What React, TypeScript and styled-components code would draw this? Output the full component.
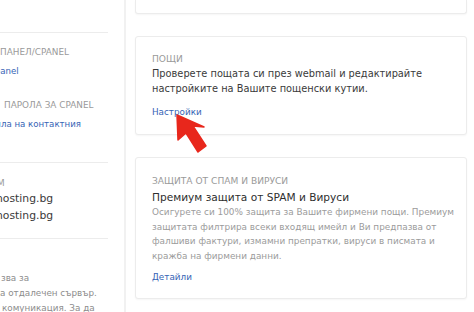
import styled, { createGlobalStyle } from "styled-components";

const GlobalStyle = createGlobalStyle`
  html, body {
    margin: 0;
    padding: 0;
    background: #ffffff;
  }
  body {
    font-family: "DejaVu Sans", "Liberation Sans", sans-serif;
    overflow: hidden;
  }
`;

const Page = styled.div({
  display: "flex",
  width: 474,
  height: 312,
  overflow: "hidden",
  background: "#fff",
});

const Sidebar = styled.aside({
  width: 108,
  flexShrink: 0,
  overflow: "hidden",
});

const SideSection = styled.div<{ $height: number; $top: number }>(
  ({ $height, $top }) => ({
    height: $height,
    boxSizing: "border-box",
    paddingTop: $top,
    borderBottom: "1px solid #ececec",
    whiteSpace: "nowrap",
    "&:last-of-type": {
      borderBottom: "none",
    },
  })
);

const SideLabel = styled.div<{ $indent?: number; $gap?: number }>(
  ({ $indent = 0, $gap = 0 }) => ({
    fontSize: 8.9,
    lineHeight: "14px",
    color: "#9a9a9a",
    textTransform: "uppercase",
    textIndent: $indent,
    marginTop: $gap,
  })
);

const SideLink = styled.a<{ $indent?: number }>(({ $indent = 0 }) => ({
  display: "block",
  fontSize: 8.6,
  lineHeight: "16px",
  marginTop: 4,
  color: "#3563b5",
  textDecoration: "none",
  textIndent: $indent,
}));

const SideValue = styled.div<{ $indent?: number }>(({ $indent = 0 }) => ({
  fontSize: 10.8,
  lineHeight: "17px",
  color: "#3a3a3a",
  textIndent: $indent,
  "&:first-of-type": {
    marginTop: 2,
  },
}));

const SideText = styled.div<{ $indent?: number }>(({ $indent = 0 }) => ({
  fontSize: 8.8,
  lineHeight: "15px",
  color: "#8c8c8c",
  textIndent: $indent,
}));

const Divider = styled.div({
  width: 16,
  flexShrink: 0,
  borderRight: "2px solid #f1f1f1",
});

const Main = styled.main({
  flex: 1,
  paddingLeft: 9,
  paddingRight: 7,
  display: "flex",
  flexDirection: "column",
  gap: 22,
});

const Card = styled.section<{ $cut?: boolean; $top?: number }>(
  ({ $cut, $top = 15 }) => ({
    position: "relative",
    boxSizing: "border-box",
    background: "#fff",
    border: "1px solid #ececec",
    borderTop: $cut ? "none" : "1px solid #ececec",
    borderRadius: $cut ? "0 0 3px 3px" : 3,
    boxShadow: "0 1px 2px rgba(0,0,0,0.04)",
    padding: $cut ? 0 : `${$top}px 6px 0 16px`,
  })
);

const CardLabel = styled.div({
  fontSize: 9.1,
  lineHeight: "14px",
  color: "#9a9a9a",
  textTransform: "uppercase",
});

const CardTitle = styled.h3({
  margin: "1px 0 0",
  fontSize: 10.6,
  fontWeight: 400,
  lineHeight: "16px",
  color: "#2e2e2e",
});

const CardBody = styled.p<{ $muted?: boolean }>(({ $muted }) => ({
  margin: 0,
  fontSize: $muted ? 8.9 : 9.8,
  lineHeight: $muted ? "14.7px" : "15px",
  color: $muted ? "#9b9b9b" : "#3a3a3a",
}));

const CardLink = styled.a<{ $gap: number }>(({ $gap }) => ({
  display: "block",
  marginTop: $gap,
  fontSize: 8.8,
  lineHeight: "14px",
  color: "#3563b5",
  textDecoration: "none",
}));

const Pointer = styled.svg({
  position: "absolute",
  left: 35,
  top: 72,
  width: 45,
  height: 48,
  overflow: "visible",
});

const RedArrow = () => (
  <Pointer viewBox="0 0 45 48">
    <polygon
      points="6,6 7,31 15,24 27,43 35,37 22,17 33,18"
      fill="#e8271c"
      stroke="#e8271c"
      strokeWidth="1.5"
      strokeLinejoin="round"
    />
  </Pointer>
);

export default function App() {
  return (
    <>
      <GlobalStyle />
      <Page>
        <Sidebar>
          <SideSection $height={33} $top={0} />
          <SideSection $height={130} $top={12}>
            <SideLabel $indent={0}>ПАНЕЛ/CPANEL</SideLabel>
            <SideLink $indent={-10}>cpanel</SideLink>
            <SideLabel $indent={4} $gap={19}>
              ПАРОЛА ЗА CPANEL
            </SideLabel>
            <SideLink $indent={-22}>имейла на контактния</SideLink>
          </SideSection>
          <SideSection $height={76} $top={13}>
            <SideLabel $indent={-3}>М</SideLabel>
            <SideValue $indent={-4}>hosting.bg</SideValue>
            <SideValue $indent={-4}>hosting.bg</SideValue>
          </SideSection>
          <SideSection $height={80} $top={32}>
            <SideText $indent={1}>зва за</SideText>
            <SideText $indent={0}>а отдалечен сървър.</SideText>
            <SideText $indent={2}>комуникация. За да</SideText>
          </SideSection>
        </Sidebar>
        <Divider />
        <Main>
          <Card $cut style={{ height: 14 }} />
          <Card $top={15} style={{ height: 99 }}>
            <CardLabel>пощи</CardLabel>
            <CardBody>
              Проверете пощата си през webmail и редактирайте настройките на
              Вашите пощенски кутии.
            </CardBody>
            <CardLink $gap={9}>Настройки</CardLink>
            <RedArrow />
          </Card>
          <Card $top={16} style={{ height: 142 }}>
            <CardLabel>Защита от спам и вируси</CardLabel>
            <CardTitle>Премиум защита от SPAM и Вируси</CardTitle>
            <CardBody $muted>
              Осигурете си 100% защита за Вашите фирмени пощи. Премиум
              защитата филтрира всеки входящ имейл и Ви предпазва от фалшиви
              фактури, измамни препратки, вируси в писмата и кражба на фирмени
              данни.
            </CardBody>
            <CardLink $gap={6}>Детайли</CardLink>
          </Card>
        </Main>
      </Page>
    </>
  );
}
